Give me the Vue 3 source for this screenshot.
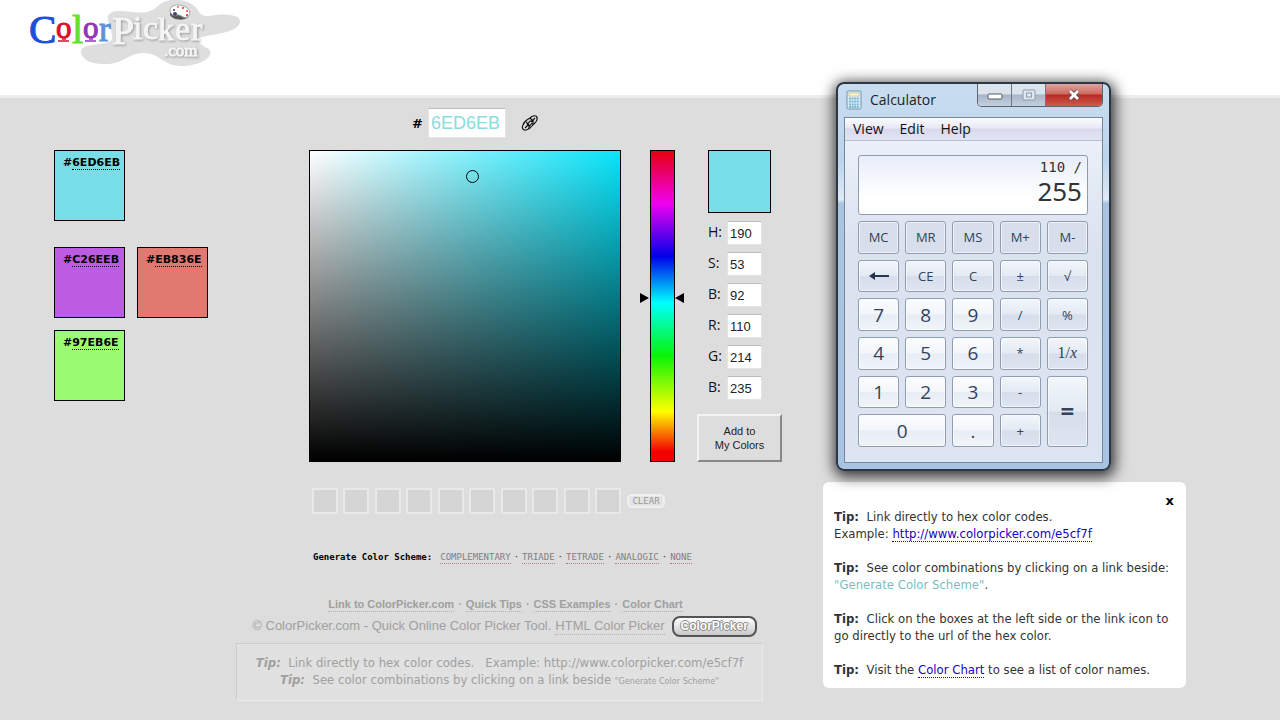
<template>
  <div class="page">
    <header class="header">
      <a href="#" class="logo" aria-label="ColorPicker.com">
        <svg width="216" height="68" viewBox="28 0 216 68">
          <path
            class="blob"
            d="M108 20C106 10 118 10 132 12C146 14 153 11 159 5C166 -2 184 -2 193 5C200 10 198 16 208 16C224 13 241 14 240 22C238 33 213 34 202 37C193 40 203 46 209 49C215 57 200 66 181 66C164 66 159 53 144 53C128 53 124 64 106 64C90 65 80 58 81 51C82 44 100 45 109 42C116 39 110 31 108 20Z"
          />
          <g class="logo-text">
            <text x="29" y="43" font-size="41" fill="#1c4fd6" stroke="#1c4fd6">C</text>
            <text x="56" y="38" font-size="31" fill="#d8102c" stroke="#d8102c">o</text>
            <text x="72" y="43" font-size="40" fill="#5fe32a" stroke="#5fe32a">l</text>
            <text x="83" y="38" font-size="31" fill="#9433b5" stroke="#9433b5">o</text>
            <text x="99" y="41" font-size="35" fill="#5d93d8" stroke="#5d93d8">r</text>
          </g>
          <path d="M58 41h11M62 39h4" stroke="#d8102c" stroke-width="1.500" />
          <path d="M85 41h11M89 39h4" stroke="#9433b5" stroke-width="1.500" />
          <g class="logo-white">
            <text x="112" y="44" font-size="40">P</text>
            <text x="133" y="39" font-size="34">i</text>
            <text x="143" y="39" font-size="34">c</text>
            <text x="158" y="40" font-size="32">k</text>
            <text x="175" y="40" font-size="34">e</text>
            <text x="191" y="40" font-size="34">r</text>
            <text x="164" y="56" font-size="17">.com</text>
          </g>
          <path d="M170 11C170 7 177 4 183 7C190 9 191 15 187 18C182 21 173 20 170 15Z" fill="#555" />
          <path d="M170 10C171 5 177 4 183 6C190 8 192 14 187 17C183 19 181 14 177 15C174 17 170 14 170 10Z" fill="#fff" stroke="#aaa" />
          <circle cx="174" cy="10" r="1" fill="#334" />
          <circle cx="178" cy="7" r="1" fill="#e66" />
          <circle cx="183" cy="8" r="1" fill="#d33" />
          <circle cx="187" cy="11" r="1" fill="#e44" />
          <circle cx="187" cy="15" r="1" fill="#c22" />
          <circle cx="175" cy="14" r="2" fill="#447" />
        </svg>
      </a>
    </header>

    <main class="main">
      <!-- Scheme colors -->
      <section class="swatches">
        <div
          v-for="color in swatches"
          :key="color.hex"
          class="swatch"
          :class="{ current: color.current }"
          :style="{ background: color.fill }"
        >
          #<a href="#">{{ color.hex }}</a>
        </div>
      </section>

      <section class="center">
        <div class="hex-row">
          <label for="hex">#</label>
          <input id="hex" v-model="hex" type="text" maxlength="6" />
          <a href="#" class="link-icon" aria-label="Link to this color">
            <svg width="18" height="18" viewBox="0 0 18 18" fill="none" stroke="#111" stroke-width="1.200">
              <path d="M2 11C3 7 6 6 9 4C12 1 16 1 16 4C17 8 13 9 11 12C8 16 3 17 2 15C1 14 1 13 2 11Z" />
              <path d="M4 14L8 10M10 8L14 4M5 8L8 11V15M9 4L12 7V11M6 11L9 7L13 6M8 13L11 9" />
            </svg>
          </a>
        </div>

        <div class="picker-row">
          <div class="field">
            <span class="field-cursor" :style="cursorStyle"></span>
          </div>
          <div class="hue">
            <input v-model.number="hue" type="range" min="0" max="360" aria-label="Hue" />
            <svg class="hue-marker" :style="{ top: markerTop }" width="46" height="12" viewBox="0 0 46 12">
              <path d="M1 1L10 6L1 11ZM45 1L36 6L45 11Z" />
            </svg>
          </div>
          <div class="values">
            <div class="preview"></div>
            <div v-for="item in values" :key="item.id" class="value-row">
              <label :for="item.id">{{ item.label }}:</label>
              <input :id="item.id" v-model="item.value" type="text" />
            </div>
            <button type="button" class="add-button">Add to<br />My Colors</button>
          </div>
        </div>

        <div class="saved">
          <div class="slots">
            <span v-for="n in 10" :key="n" class="slot"></span>
          </div>
          <button type="button" class="clear-button">CLEAR</button>
        </div>

        <nav class="scheme">
          <b>Generate Color Scheme:</b>
          <template v-for="(name, i) in schemes" :key="name">
            <i v-if="i > 0">·</i>
            <a href="#">{{ name }}</a>
          </template>
        </nav>

        <footer class="footer">
          <p class="footer-links">
            <template v-for="(name, i) in footerLinks" :key="name">
              <span v-if="i > 0">·</span>
              <a href="#">{{ name }}</a>
            </template>
          </p>
          <p class="footer-copy">
            <span>© ColorPicker.com - Quick Online Color Picker Tool.</span>
            <a href="#">HTML Color Picker</a>
            <span class="badge">ColorPicker</span>
          </p>
          <div class="footer-tips">
            <p><em>Tip:</em>&nbsp; Link directly to hex color codes. &nbsp; Example: http://www.colorpicker.com/e5cf7f</p>
            <p><em>Tip:</em>&nbsp; See color combinations by clicking on a link beside <small>"Generate Color Scheme"</small></p>
          </div>
        </footer>
      </section>

      <aside class="tips">
        <button type="button" class="tips-close">x</button>
        <p>
          <b>Tip:</b>&nbsp; Link directly to hex color codes.<br />
          Example: <a href="#">http://www.colorpicker.com/e5cf7f</a>
        </p>
        <p>
          <b>Tip:</b>&nbsp; See color combinations by clicking on a link beside:<br />
          <span class="teal">"Generate Color Scheme"</span>.
        </p>
        <p>
          <b>Tip:</b>&nbsp; Click on the boxes at the left side or the link icon to<br />
          go directly to the url of the hex color.
        </p>
        <p><b>Tip:</b>&nbsp; Visit the <a href="#">Color Chart</a> to see a list of color names.</p>
      </aside>
    </main>

    <!-- Calculator window -->
    <div class="calc">
      <div class="calc-title">
        <svg width="16" height="20" viewBox="0 0 16 20">
          <rect x="1" y="1" width="14" height="18" rx="1" fill="#d9edf7" stroke="#7495ad" />
          <rect x="3" y="3" width="10" height="3" fill="#fff6c8" stroke="#c9b778" stroke-width=".6" />
          <path d="M3 8.500H13M3 11.500H13M3 14.500H13M3 17H13" stroke="#7fb6d8" stroke-width="2" stroke-dasharray="2 .6" />
        </svg>
        <span class="calc-name">Calculator</span>
        <div class="calc-controls">
          <button type="button" aria-label="Minimize">
            <svg width="16" height="10" viewBox="0 0 16 10"><rect x="1" y="4" width="14" height="5" rx="1" fill="#fff" stroke="#555b66" /></svg>
          </button>
          <button type="button" aria-label="Maximize" disabled>
            <svg width="14" height="12" viewBox="0 0 14 12" fill="none">
              <rect x="1" y="1" width="12" height="10" rx="1" stroke="#8d9bab" fill="#dfe7ef" />
              <rect x="4.500" y="4" width="5" height="4" stroke="#8d9bab" />
            </svg>
          </button>
          <button type="button" class="calc-close" aria-label="Close">
            <svg width="14" height="12" viewBox="0 0 14 12" fill="none">
              <path d="M3 2L11 10M11 2L3 10" stroke="#5e4550" stroke-width="4.500" />
              <path d="M3 2L11 10M11 2L3 10" stroke="#fff" stroke-width="2.800" />
            </svg>
          </button>
        </div>
      </div>
      <div class="calc-client">
        <div class="calc-menu">
          <button v-for="name in menu" :key="name" type="button">{{ name }}</button>
        </div>
        <div class="calc-display">
          <span class="calc-history">110 /</span>
          <span class="calc-result">255</span>
        </div>
        <div class="calc-keys">
          <button v-for="key in keys" :key="key.text" type="button" :class="key.type">
            <svg v-if="key.text === '←'" width="22" height="10" viewBox="0 0 22 10">
              <path d="M1 5L7 1V4H21V6H7V9Z" fill="#26364f" />
            </svg>
            <template v-else-if="key.text === '1/x'">1/<i>x</i></template>
            <template v-else>{{ key.text }}</template>
          </button>
        </div>
      </div>
    </div>
  </div>
</template>

<script setup>
import { ref, computed } from 'vue'

const hex = ref('6ED6EB')
const hue = ref(190)
const saturation = 53
const brightness = 92

const swatches = [
  { hex: '6ED6EB', fill: '#78dfe8', current: true },
  { hex: 'C26EEB', fill: '#bb5ce3' },
  { hex: 'EB836E', fill: '#e17970' },
  { hex: '97EB6E', fill: '#9bfc74' }
]

const values = ref([
  { id: 'hue', label: 'H', value: '190' },
  { id: 'sat', label: 'S', value: '53' },
  { id: 'bri', label: 'B', value: '92' },
  { id: 'red', label: 'R', value: '110' },
  { id: 'green', label: 'G', value: '214' },
  { id: 'blue', label: 'B', value: '235' }
])

const schemes = ['COMPLEMENTARY', 'TRIADE', 'TETRADE', 'ANALOGIC', 'NONE']
const footerLinks = ['Link to ColorPicker.com', 'Quick Tips', 'CSS Examples', 'Color Chart']
const menu = ['View', 'Edit', 'Help']

const keys = [
  ...['MC', 'MR', 'MS', 'M+', 'M-'].map((text) => ({ text, type: 'memory' })),
  ...['←', 'CE', 'C', '±', '√'].map((text) => ({ text, type: 'op' })),
  ...['7', '8', '9'].map((text) => ({ text, type: 'digit' })),
  ...['/', '%'].map((text) => ({ text, type: 'op' })),
  ...['4', '5', '6'].map((text) => ({ text, type: 'digit' })),
  { text: '*', type: 'op' },
  { text: '1/x', type: 'op inverse' },
  ...['1', '2', '3'].map((text) => ({ text, type: 'digit' })),
  { text: '-', type: 'op' },
  { text: '=', type: 'op equals' },
  { text: '0', type: 'digit zero' },
  { text: '.', type: 'digit' },
  { text: '+', type: 'op' }
]

const cursorStyle = computed(() => ({
  left: saturation + '%',
  top: 100 - brightness + '%'
}))

const markerTop = computed(() => ((360 - hue.value) / 360) * 100 + '%')
</script>

<style>
body {
  background: #ddd;
}
</style>

<style scoped>
.page {
  position: relative;
  font-family: 'Liberation Sans', Arial, sans-serif;
  color: #333;
}

button,
input {
  font-family: inherit;
  margin: 0;
}

p {
  margin: 0;
}

.header {
  height: 95px;
  padding-left: 28px;
  background: white;
  border-bottom: 3px solid #ececec;
}

.logo svg {
  display: block;
}

.blob {
  fill: #dedede;
}

.logo-text,
.logo-white {
  font-family: 'Liberation Serif', serif;
  stroke-width: 1;
}

.logo-white {
  fill: #f4f4f4;
  stroke: #f4f4f4;
  filter: drop-shadow(1px 1px 1px #999);
}

.main {
  display: grid;
  grid-template-columns: 182px 546px minmax(0, 363px);
  padding: 0 54px;
}

/* Left swatches */
.swatches {
  display: grid;
  grid-template-columns: 71px 71px;
  align-content: start;
  gap: 12px;
  padding-top: 52px;
}

.swatch {
  box-sizing: border-box;
  height: 71px;
  padding: 5px 0 0 8px;
  border: 1px solid black;
  font: bold 11px/13px 'DejaVu Sans', Verdana, sans-serif;
  color: black;
}

.swatch.current {
  grid-column: 1 / 3;
  width: 71px;
  margin-bottom: 14px;
}

.swatch a {
  display: inline-block;
  color: black;
  text-decoration: none;
  border-bottom: 1px dotted black;
}

/* Picker */
.hex-row {
  display: flex;
  align-items: center;
  height: 30px;
  margin: 10px 0 12px 176px;
}

.hex-row label {
  width: 16px;
  font: bold 13px 'DejaVu Sans', sans-serif;
  color: black;
}

.hex-row input {
  box-sizing: border-box;
  width: 78px;
  height: 30px;
  padding: 0 2px;
  border: 1px solid #e4e4e4;
  border-top-color: #bbb;
  font-size: 18px;
  color: #88dede;
}

.link-icon {
  margin-left: 15px;
  height: 18px;
}

.picker-row {
  display: flex;
  padding-left: 73px;
}

.field {
  position: relative;
  box-sizing: border-box;
  width: 312px;
  height: 312px;
  border: 1px solid black;
  background: linear-gradient(to bottom, transparent, black), linear-gradient(to right, white, #08e4fa);
}

.field-cursor {
  position: absolute;
  width: 11px;
  height: 11px;
  margin: -6px -8px;
  border: 1px solid black;
  border-radius: 50%;
}

.hue {
  position: relative;
  width: 25px;
  height: 312px;
  margin-left: 29px;
}

.hue input {
  display: block;
  box-sizing: border-box;
  width: 25px;
  height: 312px;
  border: 1px solid black;
  appearance: none;
  writing-mode: vertical-lr;
  background: linear-gradient(#e6000c, #f000f0 17%, #0000e8 34%, #00ffff 49%, #08f408 66%, #ffff00 84%, #f40000 97%);
}

.hue input::-webkit-slider-thumb {
  appearance: none;
  width: 1px;
  height: 1px;
}

.hue-marker {
  position: absolute;
  left: -11px;
  margin-top: -5px;
  pointer-events: none;
}

.values {
  margin-left: 22px;
}

.preview {
  box-sizing: border-box;
  width: 63px;
  height: 63px;
  margin: 0 0 8px 11px;
  border: 1px solid black;
  background: #78dfe8;
}

.value-row {
  display: flex;
  gap: 4px;
  height: 24px;
  margin: 0 0 7px 11px;
}

.value-row label {
  width: 15px;
  font: 14px/22px 'Open Sans', sans-serif;
  color: #111;
}

.value-row input {
  box-sizing: border-box;
  width: 35px;
  height: 24px;
  padding: 0 2px;
  border: 1px solid #e4e4e4;
  border-top-color: #bbb;
  font-size: 13px;
  color: #222;
}

.add-button {
  width: 85px;
  height: 48px;
  margin-top: 7px;
  padding: 0;
  border: 2px solid;
  border-color: #f4f4f4 #888 #888 #f4f4f4;
  background: #ddd;
  font-size: 11px;
  line-height: 14px;
  color: #222;
}

/* Saved colors */
.saved {
  display: flex;
  align-items: center;
  gap: 6px;
  margin: 26px 0 0 76px;
}

.slots {
  display: flex;
  justify-content: space-between;
  width: 309px;
}

.slot {
  box-sizing: border-box;
  width: 26px;
  height: 26px;
  border: 2px solid #e8e8e8;
  background: #d5d5d5;
}

.clear-button {
  width: 38px;
  height: 14px;
  padding: 0;
  border: 2px solid #f0f0f0;
  border-radius: 5px;
  background: #e4e4e4;
  font: 9px/9px 'DejaVu Sans Mono', monospace;
  color: #999;
}

.scheme {
  display: flex;
  gap: 3px;
  margin: 38px 0 0 77px;
  font: 9px/11px 'DejaVu Sans Mono', monospace;
  white-space: nowrap;
}

.scheme b {
  margin-right: 5px;
  color: black;
}

.scheme i {
  font-style: normal;
}

.scheme a {
  color: #808080;
  text-decoration: none;
  border-bottom: 1px dotted #b08080;
}

/* Footer */
.footer {
  width: 527px;
  margin-top: 34px;
  text-align: center;
  color: #a0a0a0;
}

.footer a {
  color: #a0a0a0;
  text-decoration: none;
  border-bottom: 1px dotted #b4b4b4;
}

.footer-links {
  display: flex;
  justify-content: center;
  gap: 4px;
  padding-left: 12px;
  font-size: 11px;
  line-height: 13px;
  font-weight: bold;
}

.footer-copy {
  display: flex;
  justify-content: center;
  align-items: center;
  gap: 4px;
  height: 28px;
  padding-left: 10px;
  font-size: 13px;
  line-height: 16px;
  white-space: nowrap;
}

.badge {
  box-sizing: border-box;
  width: 85px;
  height: 21px;
  margin-left: 3px;
  border: 2px solid #555;
  border-radius: 8px;
  background: linear-gradient(white, #c8c8c8);
  font: bold 12px/16px 'Liberation Sans', sans-serif;
  color: white;
  text-shadow: 1px 0 #888, -1px 0 #888, 0 1px #888, 0 -1px #888;
}

.footer-tips {
  box-sizing: border-box;
  margin-top: 3px;
  padding: 10px 0;
  border: 1px solid;
  border-color: #ccc #eaeaea #eaeaea #ccc;
  background: #e1e1e1;
  font: 13px/17px 'DejaVu Sans Condensed', 'Noto Sans', sans-serif;
}

.footer-tips em {
  font-weight: bold;
}

.footer-tips small {
  font-size: 9px;
}

/* Tips panel */
.tips {
  position: relative;
  align-self: start;
  margin: 384px 0 0 41px;
  padding: 26px 11px 10px;
  border-radius: 6px;
  background: white;
  font: 13px/17px 'DejaVu Sans Condensed', 'Noto Sans', sans-serif;
  width: 341px;
  white-space: nowrap;
}

.tips p + p {
  margin-top: 17px;
}

.tips a {
  color: #1a00c8;
  text-decoration: none;
  border-bottom: 1px dotted #1a00c8;
}

.teal {
  color: #78bfc0;
}

.tips-close {
  position: absolute;
  top: 10px;
  right: 8px;
  padding: 0 4px;
  border: none;
  background: none;
  font: bold 13px/18px 'DejaVu Sans', sans-serif;
  color: black;
}

/* Calculator */
.calc {
  position: absolute;
  left: 836px;
  top: 82px;
  box-sizing: border-box;
  width: 275px;
  padding: 0 6px 6px;
  border: 2px solid #2c3644;
  border-radius: 8px;
  background: linear-gradient(to bottom, #c9ddf0, #bcd4ec 20%, #dfeaf5 30%, #a9c3e0 31%, #a8c4e2);
  box-shadow: 1px 3px 14px 3px rgba(0, 0, 0, 0.75);
}

.calc-title {
  display: flex;
  align-items: flex-start;
  height: 33px;
}

.calc-title > svg {
  margin: 6px 0 0 2px;
}

.calc-name {
  flex: 1;
  margin-left: 8px;
  font: 14px/32px 'Open Sans', sans-serif;
  color: #222;
}

.calc-controls {
  display: flex;
  border: 1px solid #5b6470;
  border-top: none;
  border-radius: 0 0 5px 5px;
  overflow: hidden;
}

.calc-controls button {
  display: flex;
  justify-content: center;
  align-items: center;
  width: 34px;
  height: 22px;
  padding: 0;
  border: none;
  border-right: 1px solid #6d7682;
  background: linear-gradient(#dbe3ec 45%, #a9b5c4 50%, #c3d0df);
}

.calc-controls .calc-close {
  width: 56px;
  border-right: none;
  background: linear-gradient(#dba49e, #cf6a62 45%, #b52a22 50%, #cf5a4e);
}

.calc-client {
  border: 1px solid #76879c;
  background: linear-gradient(#eef2fb, #dae2ee 40%, #dce5f1);
}

.calc-menu {
  display: flex;
  height: 22px;
  background: linear-gradient(#fbfbff, #e9e9f6 45%, #d8d9ec 50%, #e3e5f3);
  border-bottom: 1px solid #b9bccd;
}

.calc-menu button {
  padding: 0 8px;
  border: none;
  background: none;
  font: 14px/22px 'Open Sans', sans-serif;
  color: #111;
}

.calc-display {
  display: flex;
  flex-direction: column;
  align-items: flex-end;
  box-sizing: border-box;
  height: 60px;
  margin: 14px 14px 6px 13px;
  padding: 3px 5px;
  border: 1px solid #8e9cb0;
  border-radius: 3px;
  background: linear-gradient(#e8edf9, white 70%);
}

.calc-history {
  font: 14px/17px 'DejaVu Sans Mono', monospace;
}

.calc-result {
  font: 26px/30px 'Noto Sans', sans-serif;
}

.calc-keys {
  display: grid;
  grid-template-columns: repeat(5, 1fr);
  grid-template-rows: repeat(6, 1fr);
  gap: 6px;
  height: 226px;
  margin: 0 14px 15px 13px;
}

.calc-keys button {
  display: flex;
  justify-content: center;
  align-items: center;
  padding: 0;
  border: 1px solid #8f9db2;
  border-radius: 3px;
  background: linear-gradient(#f2f6fb, #e3eaf3 49%, #d5deea 51%, #dde5f0);
  box-shadow: inset 0 0 0 1px rgba(255, 255, 255, 0.6);
  font: 13px/18px 'Open Sans', sans-serif;
  color: #33435c;
}

.calc-keys .memory {
  background: #d6dfeb;
}

.calc-keys .digit {
  background: linear-gradient(#fbfcfe, #f3f6fa 49%, #e7edf4 51%, #f1f5fa);
  font-size: 19px;
}

.calc-keys .inverse {
  font: 16px/18px 'Liberation Serif', serif;
}

.calc-keys .equals {
  grid-row: span 2;
  font-size: 24px;
  font-weight: bold;
}

.calc-keys .zero {
  grid-column: span 2;
}
</style>
